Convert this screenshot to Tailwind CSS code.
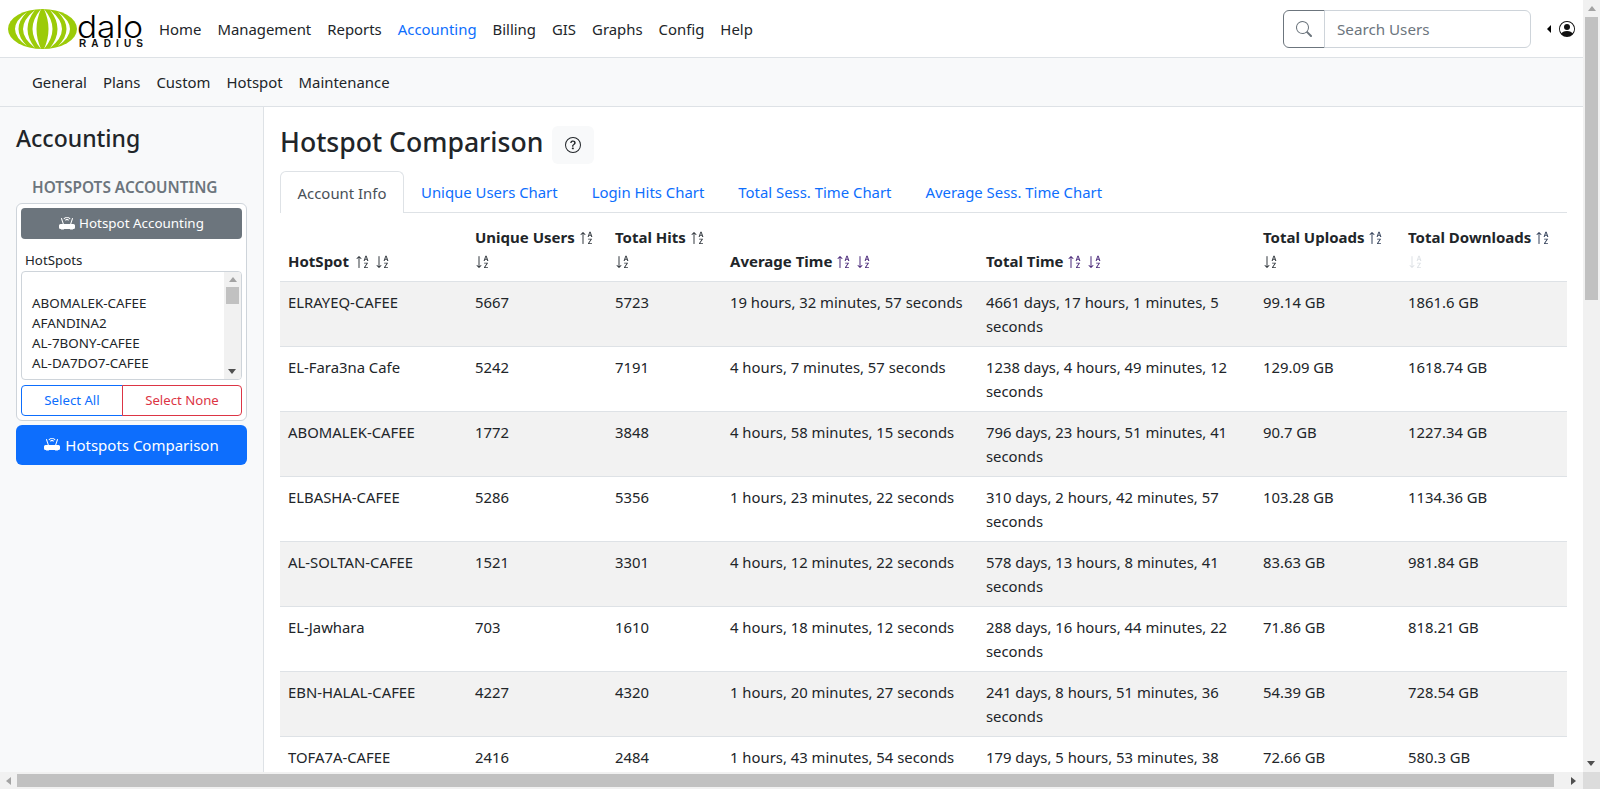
<!doctype html>
<html>
<head>
<meta charset="utf-8">
<script src="https://cdn.jsdelivr.net/npm/@tailwindcss/browser@4"></script>
</head>
<body class="m-0 overflow-hidden bg-white">
<div class="relative h-[789px] w-[1600px] overflow-hidden font-['Noto_Sans',sans-serif] text-[14px] text-[#212529]">
  <div class="h-[772px] w-[1583px] overflow-hidden">
    <!-- top nav -->
    <nav class="flex h-[58px] items-center border-b border-[#dee2e6] bg-white">
      <div class="ml-[8px] h-[42px] w-[136px] shrink-0">
        <svg width="136" height="42" viewBox="0 0 136 42">
          <ellipse cx="34.5" cy="21" rx="34.5" ry="20" fill="#9ccb08"/>
          <g fill="#fff">
            <path d="M36 1Q45 21 36 41Q53 21 36 1Z"/><path d="M33 1Q24 21 33 41Q16 21 33 1Z"/>
            <path d="M42 2Q57 21 42 40Q66 21 42 2Z"/><path d="M27 2Q12 21 27 40Q3 21 27 2Z"/>
            <path d="M50 4Q67 21 50 38Q74 21 50 4Z"/><path d="M19 4Q2 21 19 38Q-5 21 19 4Z"/>
          </g>
          <text x="69" y="29.5" font-family="Inter" font-weight="300" font-size="31" textLength="66" lengthAdjust="spacingAndGlyphs" fill="#000">dalo</text>
          <text x="71" y="38.5" font-family="Liberation Sans" font-size="10" font-weight="700" textLength="64" fill="#111">RADIUS</text>
        </svg>
      </div>
      <div class="ml-[7px] flex pt-[2px] text-[14.9px]">
        <a class="px-[8px]">Home</a><a class="px-[8px]">Management</a><a class="px-[8px]">Reports</a><a class="px-[8px] text-[#0d6efd]">Accounting</a><a class="px-[8px]">Billing</a><a class="px-[8px]">GIS</a><a class="px-[8px]">Graphs</a><a class="px-[8px]">Config</a><a class="px-[8px]">Help</a>
      </div>
      <div class="ml-auto flex h-[38px] w-[248px] mr-[52px]">
        <div class="flex w-[42px] items-center justify-center rounded-l-[6px] border border-[#6c757d] text-[#6c757d]">
          <svg width="16" height="16" viewBox="0 0 16 16" fill="currentColor"><path d="M11.742 10.344a6.5 6.5 0 1 0-1.397 1.398h-.001c.03.04.062.078.098.115l3.85 3.85a1 1 0 0 0 1.415-1.414l-3.85-3.85a1.007 1.007 0 0 0-.115-.1zM12 6.5a5.5 5.5 0 1 1-11 0 5.5 5.5 0 0 1 11 0z"/></svg>
        </div>
        <div class="-ml-px flex flex-1 items-center rounded-r-[6px] border border-[#ced4da] pt-[2px] pl-[12px] text-[15.2px] text-[#6c757d]">Search Users</div>
      </div>
    </nav>
    <!-- sub nav -->
    <div class="flex h-[49px] items-center border-b border-[#dee2e6] bg-[#f8f9fa] pl-[24px] text-[14.9px]">
      <a class="px-[8px]">General</a><a class="px-[8px]">Plans</a><a class="px-[8px]">Custom</a><a class="px-[8px]">Hotspot</a><a class="px-[8px]">Maintenance</a>
    </div>
    <div class="flex">
      <!-- sidebar -->
      <aside class="h-[700px] w-[264px] shrink-0 border-r border-[#dee2e6] bg-[#f8f9fa] px-[16px]">
        <h2 class="mt-[15px] text-[23px] leading-[33px] font-medium text-[#212529]">Accounting</h2>
        <h6 class="mt-[23px] pl-[16px] text-[15.4px] leading-[20px] font-semibold text-[#6c757d]">HOTSPOTS ACCOUNTING</h6>
        <div class="mt-[5px] h-[218px] w-[231px] rounded-[6px] border border-[#ced4da] bg-white p-[4px]">
          <div class="flex h-[31px] items-center justify-center gap-[4px] rounded-[4px] bg-[#6c757d] text-[13.4px] text-white">
            <svg width="16" height="16" viewBox="0 0 16 16" fill="currentColor"><path d="M5.525 3.025a3.5 3.5 0 0 1 4.95 0 .5.5 0 1 0 .707-.707 4.5 4.5 0 0 0-6.364 0 .5.5 0 0 0 .707.707Z"/><path d="M6.94 4.44a1.5 1.5 0 0 1 2.12 0 .5.5 0 0 0 .708-.708 2.5 2.5 0 0 0-3.536 0 .5.5 0 0 0 .707.707Z"/><path d="M2.974 2.342a.5.5 0 1 0-.948.316L3.806 8H1.5A1.5 1.5 0 0 0 0 9.5v2A1.5 1.5 0 0 0 1.5 13H2a.5.5 0 0 0 .5.5h2A.5.5 0 0 0 5 13h6a.5.5 0 0 0 .5.5h2a.5.5 0 0 0 .5-.5h.5a1.5 1.5 0 0 0 1.5-1.5v-2A1.5 1.5 0 0 0 14.5 8h-2.306l1.78-5.342a.5.5 0 1 0-.948-.316L11.14 8H4.86L2.974 2.342Z"/></svg>
            Hotspot Accounting
          </div>
          <div class="mt-[11px] pl-[4px] text-[13.3px] leading-[20px]">HotSpots</div>
          <div class="relative mt-[1px] h-[109px] overflow-hidden rounded-[4px] border border-[#ced4da] pt-[21px] pl-[10px] text-[13.4px] leading-[20px]">
            <div>ABOMALEK-CAFEE</div><div>AFANDINA2</div><div>AL-7BONY-CAFEE</div><div>AL-DA7DO7-CAFEE</div><div>AL-SOLTAN-CAFEE</div>
            <div class="absolute top-0 right-0 h-full w-[17px] bg-[#f1f1f1]">
              <div class="mx-auto mt-[5px] h-0 w-0 border-x-[4px] border-b-[5px] border-x-transparent border-b-[#a3a3a3]"></div>
              <div class="mx-[2px] mt-[5px] h-[17px] bg-[#c1c1c1]"></div>
              <div class="absolute bottom-[5px] left-[4px] h-0 w-0 border-x-[4px] border-t-[5px] border-x-transparent border-t-[#505050]"></div>
            </div>
          </div>
          <div class="mt-[5px] flex h-[31px] text-[13.2px]">
            <div class="flex w-[102px] items-center justify-center rounded-l-[4px] border border-[#0d6efd] text-[#0d6efd]">Select All</div>
            <div class="-ml-px flex flex-1 items-center justify-center rounded-r-[4px] border border-[#dc3545] text-[#dc3545]">Select None</div>
          </div>
        </div>
        <div class="mt-[4px] flex h-[40px] w-[231px] items-center justify-center gap-[5px] rounded-[6px] bg-[#0d6efd] text-[15px] text-white">
          <svg width="16" height="16" viewBox="0 0 16 16" fill="currentColor"><path d="M5.525 3.025a3.5 3.5 0 0 1 4.95 0 .5.5 0 1 0 .707-.707 4.5 4.5 0 0 0-6.364 0 .5.5 0 0 0 .707.707Z"/><path d="M6.94 4.44a1.5 1.5 0 0 1 2.12 0 .5.5 0 0 0 .708-.708 2.5 2.5 0 0 0-3.536 0 .5.5 0 0 0 .707.707Z"/><path d="M2.974 2.342a.5.5 0 1 0-.948.316L3.806 8H1.5A1.5 1.5 0 0 0 0 9.5v2A1.5 1.5 0 0 0 1.5 13H2a.5.5 0 0 0 .5.5h2A.5.5 0 0 0 5 13h6a.5.5 0 0 0 .5.5h2a.5.5 0 0 0 .5-.5h.5a1.5 1.5 0 0 0 1.5-1.5v-2A1.5 1.5 0 0 0 14.5 8h-2.306l1.78-5.342a.5.5 0 1 0-.948-.316L11.14 8H4.86L2.974 2.342Z"/></svg>
          Hotspots Comparison
        </div>
      </aside>
      <!-- main -->
      <main class="w-[1303px] shrink-0 pl-[16px]">
        <div class="mt-[19px] flex h-[38px] items-center gap-[9px]">
          <h1 class="mb-[6px] text-[26.6px] leading-[38px] font-medium">Hotspot Comparison</h1>
          <div class="flex h-[38px] w-[42px] items-center justify-center rounded-[6px] bg-[#f8f9fa]">
            <svg width="16" height="16" viewBox="0 0 16 16" fill="currentColor"><path d="M8 15A7 7 0 1 1 8 1a7 7 0 0 1 0 14zm0 1A8 8 0 1 0 8 0a8 8 0 0 0 0 16z"/><path d="M5.255 5.786a.237.237 0 0 0 .241.247h.825c.138 0 .248-.113.266-.25.09-.656.54-1.134 1.342-1.134.686 0 1.314.343 1.314 1.168 0 .635-.374.927-.965 1.371-.673.489-1.206 1.06-1.168 1.987l.003.217a.25.25 0 0 0 .25.246h.811a.25.25 0 0 0 .25-.25v-.105c0-.718.273-.927 1.01-1.486.609-.463 1.244-.977 1.244-2.056 0-1.511-1.276-2.241-2.673-2.241-1.267 0-2.655.59-2.75 2.286zm1.557 5.763c0 .533.425.927 1.01.927.609 0 1.028-.394 1.028-.927 0-.552-.42-.94-1.029-.94-.584 0-1.009.388-1.009.94z"/></svg>
          </div>
        </div>
        <div class="mt-[7px] flex h-[42px] w-[1287px] border-b border-[#dee2e6] text-[14.9px] text-[#0d6efd]">
          <div class="flex h-[42px] w-[124px] items-center justify-center rounded-t-[6px] border border-b-0 border-[#dee2e6] bg-white pt-[1px] text-[#495057]">Account Info</div>
          <div class="flex h-[41px] items-center px-[17px] pt-[1px]">Unique Users Chart</div>
          <div class="flex h-[41px] items-center px-[17px] pt-[1px]">Login Hits Chart</div>
          <div class="flex h-[41px] items-center px-[17px] pt-[1px]">Total Sess. Time Chart</div>
          <div class="flex h-[41px] items-center px-[17px] pt-[1px]">Average Sess. Time Chart</div>
        </div>
        <table class="w-[1287px] table-fixed border-collapse text-[14.85px]">
          <colgroup><col class="w-[187px]"><col class="w-[140px]"><col class="w-[115px]"><col class="w-[256px]"><col class="w-[277px]"><col class="w-[145px]"><col class="w-[167px]"></colgroup>
          <thead>
            <tr class="border-b border-[#dee2e6] align-bottom text-left text-[15px]">
              <th class="px-[8px] pt-[12px] pb-[8px] leading-[24px] font-bold">HotSpot <span class="ml-[2px] inline-flex gap-[4px] align-[-3px]"><svg width="16" height="16" viewBox="0 0 16 16" fill="#343a40"><use href="#up"/></svg><svg width="16" height="16" viewBox="0 0 16 16" fill="#343a40"><use href="#down"/></svg></span></th>
              <th class="px-[8px] pt-[12px] pb-[8px] leading-[24px] font-bold">Unique Users <svg class="inline align-[-3px]" width="16" height="16" viewBox="0 0 16 16" fill="#343a40"><use href="#up"/></svg><br><svg class="inline align-[-3px]" width="16" height="16" viewBox="0 0 16 16" fill="#343a40"><use href="#down"/></svg></th>
              <th class="px-[8px] pt-[12px] pb-[8px] leading-[24px] font-bold">Total Hits <svg class="inline align-[-3px]" width="16" height="16" viewBox="0 0 16 16" fill="#343a40"><use href="#up"/></svg><br><svg class="inline align-[-3px]" width="16" height="16" viewBox="0 0 16 16" fill="#343a40"><use href="#down"/></svg></th>
              <th class="px-[8px] pt-[12px] pb-[8px] leading-[24px] font-bold">Average Time <span class="inline-flex gap-[4px] align-[-3px]"><svg width="16" height="16" viewBox="0 0 16 16" fill="#4b2a7a"><use href="#up"/></svg><svg width="16" height="16" viewBox="0 0 16 16" fill="#4b2a7a"><use href="#down"/></svg></span></th>
              <th class="px-[8px] pt-[12px] pb-[8px] leading-[24px] font-bold">Total Time <span class="inline-flex gap-[4px] align-[-3px]"><svg width="16" height="16" viewBox="0 0 16 16" fill="#4b2a7a"><use href="#up"/></svg><svg width="16" height="16" viewBox="0 0 16 16" fill="#4b2a7a"><use href="#down"/></svg></span></th>
              <th class="px-[8px] pt-[12px] pb-[8px] leading-[24px] font-bold">Total Uploads <svg class="inline align-[-3px]" width="16" height="16" viewBox="0 0 16 16" fill="#33415a"><use href="#up"/></svg><br><svg class="inline align-[-3px]" width="16" height="16" viewBox="0 0 16 16" fill="#343a40"><use href="#down"/></svg></th>
              <th class="px-[8px] pt-[12px] pb-[8px] leading-[24px] font-bold">Total Downloads <svg class="inline align-[-3px]" width="16" height="16" viewBox="0 0 16 16" fill="#33415a"><use href="#up"/></svg><br><svg class="inline align-[-3px]" width="16" height="16" viewBox="0 0 16 16" fill="#dee2e6"><use href="#down"/></svg></th>
            </tr>
          </thead>
          <tbody class="leading-[24px] [&_td]:p-[8px]">
            <tr class="h-[65px] border-b border-[#dee2e6] bg-[#f2f2f2] align-top"><td>ELRAYEQ-CAFEE</td><td>5667</td><td>5723</td><td>19 hours, 32 minutes, 57 seconds</td><td>4661 days, 17 hours, 1 minutes, 5 seconds</td><td>99.14 GB</td><td>1861.6 GB</td></tr>
            <tr class="h-[65px] border-b border-[#dee2e6] align-top"><td>EL-Fara3na Cafe</td><td>5242</td><td>7191</td><td>4 hours, 7 minutes, 57 seconds</td><td>1238 days, 4 hours, 49 minutes, 12 seconds</td><td>129.09 GB</td><td>1618.74 GB</td></tr>
            <tr class="h-[65px] border-b border-[#dee2e6] bg-[#f2f2f2] align-top"><td>ABOMALEK-CAFEE</td><td>1772</td><td>3848</td><td>4 hours, 58 minutes, 15 seconds</td><td>796 days, 23 hours, 51 minutes, 41 seconds</td><td>90.7 GB</td><td>1227.34 GB</td></tr>
            <tr class="h-[65px] border-b border-[#dee2e6] align-top"><td>ELBASHA-CAFEE</td><td>5286</td><td>5356</td><td>1 hours, 23 minutes, 22 seconds</td><td>310 days, 2 hours, 42 minutes, 57 seconds</td><td>103.28 GB</td><td>1134.36 GB</td></tr>
            <tr class="h-[65px] border-b border-[#dee2e6] bg-[#f2f2f2] align-top"><td>AL-SOLTAN-CAFEE</td><td>1521</td><td>3301</td><td>4 hours, 12 minutes, 22 seconds</td><td>578 days, 13 hours, 8 minutes, 41 seconds</td><td>83.63 GB</td><td>981.84 GB</td></tr>
            <tr class="h-[65px] border-b border-[#dee2e6] align-top"><td>EL-Jawhara</td><td>703</td><td>1610</td><td>4 hours, 18 minutes, 12 seconds</td><td>288 days, 16 hours, 44 minutes, 22 seconds</td><td>71.86 GB</td><td>818.21 GB</td></tr>
            <tr class="h-[65px] border-b border-[#dee2e6] bg-[#f2f2f2] align-top"><td>EBN-HALAL-CAFEE</td><td>4227</td><td>4320</td><td>1 hours, 20 minutes, 27 seconds</td><td>241 days, 8 hours, 51 minutes, 36 seconds</td><td>54.39 GB</td><td>728.54 GB</td></tr>
            <tr class="h-[65px] border-b border-[#dee2e6] align-top"><td>TOFA7A-CAFEE</td><td>2416</td><td>2484</td><td>1 hours, 43 minutes, 54 seconds</td><td>179 days, 5 hours, 53 minutes, 38 seconds</td><td>72.66 GB</td><td>580.3 GB</td></tr>
          </tbody>
        </table>
      </main>
    </div>
  </div>
  <!-- user menu over the nav -->
  <div class="absolute top-[21px] left-[1547px] flex items-center gap-[8px]">
    <div class="h-0 w-0 border-y-[4px] border-r-[4px] border-y-transparent border-r-black"></div>
    <svg width="16" height="16" viewBox="0 0 16 16" fill="#111"><path d="M11 6a3 3 0 1 1-6 0 3 3 0 0 1 6 0z"/><path fill-rule="evenodd" d="M0 8a8 8 0 1 1 16 0A8 8 0 0 1 0 8zm8-7a7 7 0 0 0-5.468 11.37C3.242 11.226 4.805 10 8 10s4.757 1.225 5.468 2.37A7 7 0 0 0 8 1z"/></svg>
  </div>
  <!-- browser scrollbars -->
  <div class="absolute top-0 right-0 h-[772px] w-[17px] bg-[#f1f1f1]">
    <div class="mx-auto mt-[6px] h-0 w-0 border-x-[4px] border-b-[5px] border-x-transparent border-b-[#a3a3a3]"></div>
    <div class="mx-[2px] mt-[6px] h-[283px] bg-[#c1c1c1]"></div>
    <div class="absolute bottom-[6px] left-[4px] h-0 w-0 border-x-[4px] border-t-[5px] border-x-transparent border-t-[#505050]"></div>
  </div>
  <div class="absolute bottom-0 left-0 flex h-[17px] w-[1600px] items-center bg-[#f1f1f1]">
    <div class="ml-[6px] h-0 w-0 border-y-[4px] border-r-[5px] border-y-transparent border-r-[#a3a3a3]"></div>
    <div class="ml-[6px] h-[13px] w-[1537px] bg-[#c1c1c1]"></div>
    <div class="ml-[17px] h-0 w-0 border-y-[4px] border-l-[5px] border-y-transparent border-l-[#505050]"></div>
    <div class="absolute top-0 right-0 h-[17px] w-[17px] bg-[#dcdcdc]"></div>
  </div>
  <svg class="hidden"><defs>
    <g id="up"><path d="M10.082 5.629 9.664 7H8.598l1.789-5.332h1.234L13.402 7h-1.12l-.419-1.371h-1.781zm1.57-.785L11 2.687h-.047l-.652 2.157h1.351z"/><path d="M12.96 14H9.028v-.691l2.579-3.72v-.054H9.098v-.867h3.785v.691l-2.567 3.72v.054h2.645V14z"/><path d="M4.5 13.5a.5.5 0 0 1-1 0V3.707L2.354 4.854a.5.5 0 1 1-.708-.708l2-1.999.007-.007a.498.498 0 0 1 .7.006l2 2a.5.5 0 1 1-.707.708L4.5 3.707V13.5z"/></g>
    <g id="down"><path d="M10.082 5.629 9.664 7H8.598l1.789-5.332h1.234L13.402 7h-1.12l-.419-1.371h-1.781zm1.57-.785L11 2.687h-.047l-.652 2.157h1.351z"/><path d="M12.96 14H9.028v-.691l2.579-3.72v-.054H9.098v-.867h3.785v.691l-2.567 3.72v.054h2.645V14z"/><path d="M4.5 2.5a.5.5 0 0 0-1 0v9.793l-1.146-1.147a.5.5 0 0 0-.708.708l2 1.999.007.007a.497.497 0 0 0 .7-.006l2-2a.5.5 0 0 0-.707-.708L4.5 12.293V2.5z"/></g>
  </defs></svg>
</div>
</body>
</html>
